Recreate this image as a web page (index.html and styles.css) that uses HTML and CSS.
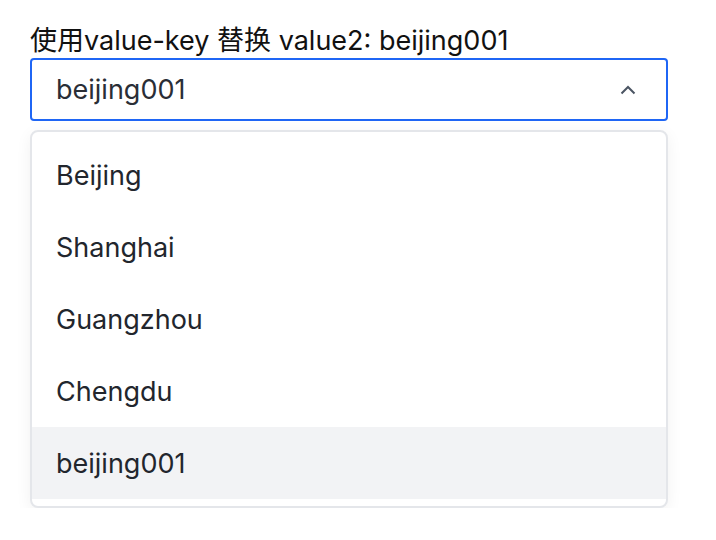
FILE: index.html
```html
<!DOCTYPE html>
<html>
<head>
<meta charset="utf-8">
<link rel="stylesheet" href="styles.css">
</head>
<body>
<div class="page">
  <div class="label">使用value-key 替换 value2: beijing001</div>
  <div class="select">
    <span class="value">beijing001</span>
    <svg class="arrow" width="16" height="10" viewBox="0 0 16 10"><path d="M1.5 8.5 L8 2 L14.5 8.5" fill="none" stroke="#4b5563" stroke-width="2"/></svg>
  </div>
  <div class="menu">
    <div class="option">Beijing</div>
    <div class="option">Shanghai</div>
    <div class="option">Guangzhou</div>
    <div class="option">Chengdu</div>
    <div class="option active">beijing001</div>
  </div>
</div>
</body>
</html>
```
FILE: styles.css
```css
html, body { margin: 0; padding: 0; background: #fff; }
body { font-family: Inter, "Noto Sans CJK SC", sans-serif; }
.page { padding: 24px 48px 0 30px; width: 638px; }
.label { font-size: 27px; line-height: 34px; color: #111; }
.select {
  box-sizing: border-box;
  height: 63px;
  border: 2px solid #1f66f5;
  border-radius: 4px;
  display: flex;
  align-items: center;
  justify-content: space-between;
  padding: 0 30px 0 24px;
}
.value { font-size: 27px; color: #2a2e36; }
.arrow { display: block; }
.menu {
  margin-top: 9px;
  box-sizing: border-box;
  border: 2px solid #e4e6ea;
  border-radius: 8px;
  padding: 7px 0 7px;
  box-shadow: 0 4px 16px rgba(0,0,0,0.06);
  background: #fff;
}
.option {
  height: 72px;
  display: flex;
  align-items: center;
  padding-left: 24px;
  font-size: 27px;
  color: #22262d;
}
.option.active { background: #f2f3f5; }
```
